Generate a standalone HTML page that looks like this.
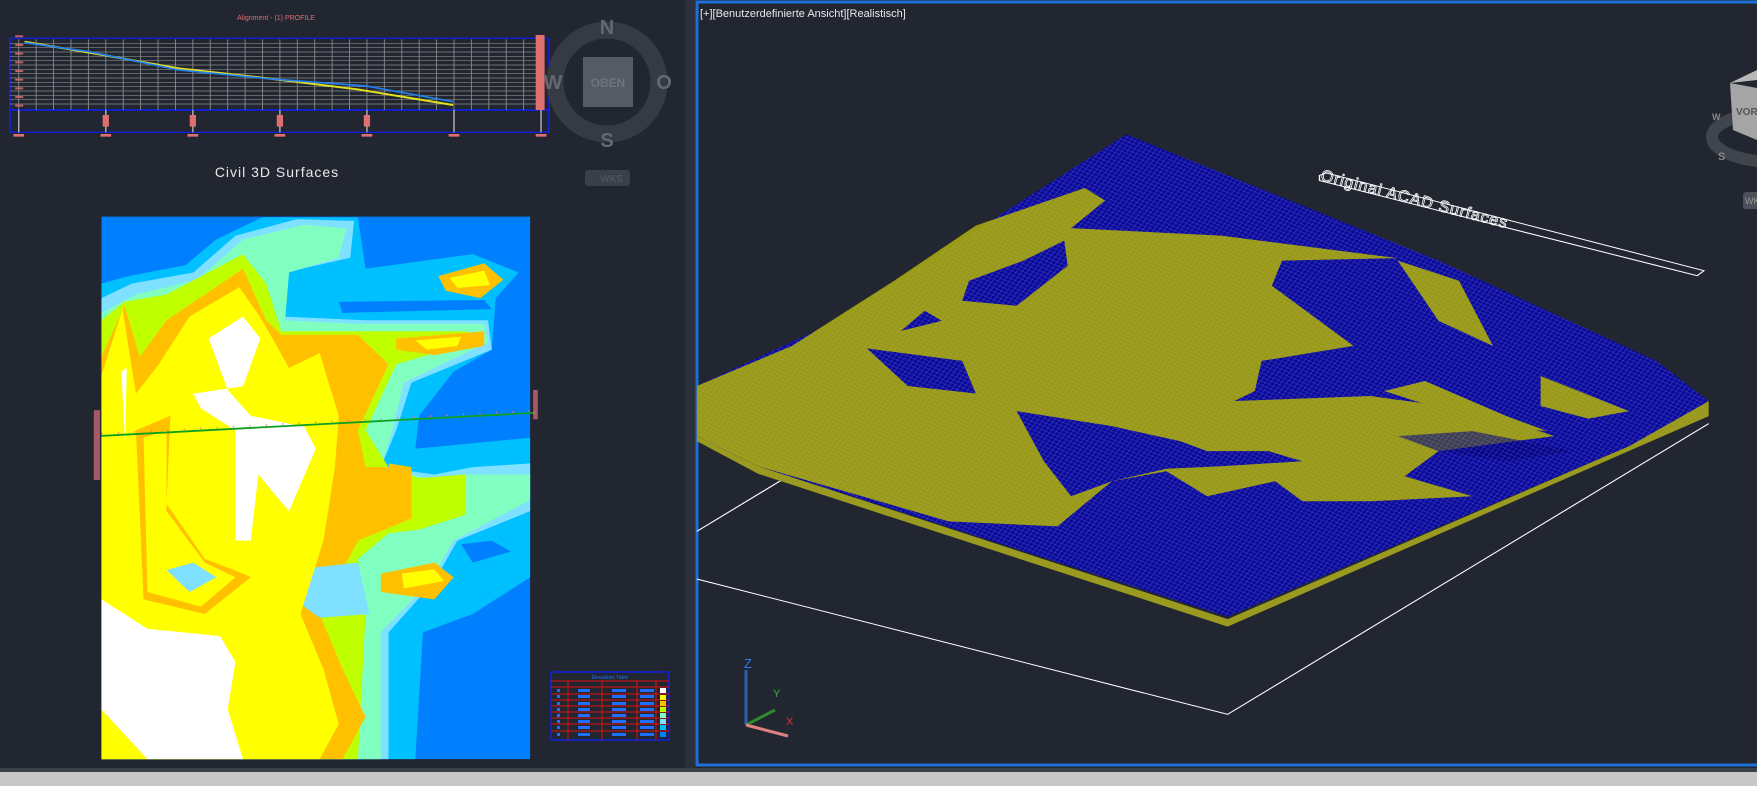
<!DOCTYPE html>
<html><head><meta charset="utf-8"><style>
html,body{margin:0;padding:0;width:1757px;height:786px;overflow:hidden;background:#212630;font-family:"Liberation Sans",sans-serif}
svg{position:absolute;left:0;top:0}
</style></head><body>
<svg width="1757" height="786" viewBox="0 0 1757 786" xmlns="http://www.w3.org/2000/svg">
<defs>
<pattern id="mesh" width="7" height="7" patternUnits="userSpaceOnUse" patternTransform="rotate(30)">
<path d="M0 0H7M0 0V7" stroke="#b0b0c0" stroke-width="0.9" opacity="0.6"/>
</pattern>
</defs>
<rect width="1757" height="786" fill="#212630"/>
<rect x="685" y="0" width="10" height="770" fill="#2b303a"/>
<rect x="0" y="768" width="1757" height="4" fill="#3a3f48"/>
<rect x="0" y="772" width="1757" height="14" fill="#c8c8c8"/>

<!-- PROFILE -->
<text x="276" y="20" fill="#e07070" font-size="7" text-anchor="middle">Alignment - (1) PROFILE</text>
<g transform="scale(0.4464,0.3333)">
<rect x="22" y="115" width="1208" height="282" fill="none" stroke="#1020e0" stroke-width="4"/>
<line x1="22" y1="330" x2="1230" y2="330" stroke="#1020e0" stroke-width="5"/>
<g stroke="#8a8a8a" stroke-width="2">
<path d="M42 118V330M81 118V330M120 118V330M159 118V330M198 118V330M237 118V330M276 118V330M315 118V330M354 118V330M393 118V330M432 118V330M471 118V330M510 118V330M549 118V330M588 118V330M627 118V330M666 118V330M705 118V330M744 118V330M783 118V330M822 118V330M861 118V330M900 118V330M939 118V330M978 118V330M1017 118V330M1056 118V330M1095 118V330M1134 118V330M1173 118V330"/>
<path d="M22 130H1200M22 143H1200M22 156H1200M22 169H1200M22 182H1200M22 195H1200M22 208H1200M22 221H1200M22 234H1200M22 247H1200M22 260H1200M22 273H1200M22 286H1200M22 299H1200M22 312H1200"/>
<path d="M42 330V397M237 330V397M432 330V397M627 330V397M822 330V397M1017 330V397M1212 330V397" stroke="#bbb" stroke-width="3"/>
</g>
<rect x="1200" y="105" width="20" height="225" fill="#e07070"/>
<polyline points="55,125 200,158 400,205 600,235 800,268 1015,315" fill="none" stroke="#e0e020" stroke-width="6"/>
<polyline points="55,128 200,155 400,210 600,236 820,258 1015,305" fill="none" stroke="#2080f0" stroke-width="5"/>
<g fill="#e07070"><rect x="230" y="345" width="14" height="35"/><rect x="425" y="345" width="14" height="35"/><rect x="620" y="345" width="14" height="35"/><rect x="815" y="345" width="14" height="35"/>
<rect x="30" y="402" width="24" height="8"/><rect x="225" y="402" width="24" height="8"/><rect x="420" y="402" width="24" height="8"/><rect x="615" y="402" width="24" height="8"/><rect x="810" y="402" width="24" height="8"/><rect x="1005" y="402" width="24" height="8"/><rect x="1200" y="402" width="24" height="8"/>
<g opacity="0.8"><rect x="34" y="106" width="18" height="6"/><rect x="34" y="132" width="18" height="6"/><rect x="34" y="158" width="18" height="6"/><rect x="34" y="184" width="18" height="6"/><rect x="34" y="210" width="18" height="6"/><rect x="34" y="236" width="18" height="6"/><rect x="34" y="262" width="18" height="6"/><rect x="34" y="288" width="18" height="6"/><rect x="34" y="314" width="18" height="6"/></g></g>
</g>
<text x="277" y="177" fill="#e8e8e8" font-size="14" text-anchor="middle" letter-spacing="1">Civil 3D Surfaces</text>

<!-- compass -->
<circle cx="607" cy="82" r="52" fill="none" stroke="#353a43" stroke-width="17"/>
<rect x="583" y="57" width="50" height="50" fill="#555a63"/>
<text x="608" y="87" fill="#6e747e" font-size="12" font-weight="bold" text-anchor="middle">OBEN</text>
<g fill="#636872" font-size="20" font-weight="bold" text-anchor="middle">
<text x="607" y="34">N</text><text x="607" y="147">S</text><text x="553" y="89">W</text><text x="664" y="89">O</text></g>
<rect x="585" y="170" width="45" height="16" rx="3" fill="#3a3f48"/>
<text x="600" y="182" fill="#555b64" font-size="10">WKS</text>

<!-- MAP -->
<g transform="translate(90,210) scale(0.3827,0.3673)">
<rect x="30" y="18" width="1120" height="1477" fill="#0080ff"/>
<polygon fill="#00c0ff" points="30,200 100,180 250,150 330,80 450,20 700,20 720,160 1000,120 1120,170 1060,240 1050,380 950,440 860,560 850,650 1150,620 1150,1000 1000,1100 870,1150 850,1495 30,1495"/>
<polygon fill="#80e0ff" points="30,240 110,200 270,170 380,70 540,25 690,30 680,130 510,170 500,290 720,300 1040,300 1050,380 840,470 800,600 760,700 900,720 1000,700 1150,690 1150,820 960,900 900,1010 780,1150 780,1495 30,1495"/>
<polygon fill="#80ffc0" points="30,280 120,230 280,190 400,80 560,40 670,50 650,130 520,170 510,300 700,310 1030,310 1040,360 820,470 790,600 760,700 880,730 990,720 1150,720 1150,790 950,900 890,1010 760,1150 760,1495 30,1495"/>
<polygon fill="#c0ff00" points="30,300 90,250 200,230 400,120 460,200 500,330 780,330 980,330 1030,350 800,420 720,600 780,700 860,730 980,720 980,830 860,870 780,880 700,950 720,1100 700,1495 30,1495"/>
<polygon fill="#ffc000" points="30,400 90,260 130,400 200,300 400,160 460,300 500,340 700,340 780,420 700,600 720,700 790,700 840,840 700,900 600,1100 660,1250 720,1380 660,1495 30,1495"/>
<polygon fill="#c0ff00" points="150,960 260,940 380,1000 300,1060 180,1040"/>
<polygon fill="#80e0ff" points="440,990 700,960 730,1100 600,1110"/>
<polygon fill="#ffff00" points="30,450 85,270 120,500 180,420 260,290 390,210 450,300 520,430 600,390 650,560 640,700 610,900 550,1100 610,1250 650,1400 600,1495 30,1495"/>
<polygon fill="#ffc000" points="120,600 210,560 200,800 300,950 400,990 420,1000 300,1100 140,1060"/>
<polygon fill="#ffff00" points="140,620 200,600 200,820 300,960 380,1000 290,1080 150,1040"/>
<polygon fill="#80e0ff" points="200,980 270,960 330,1000 260,1040"/>
<polygon fill="#ffffff" points="310,350 400,290 445,350 400,480 270,500 290,540 380,600 380,900 420,900 440,720 520,820 590,650 560,590 420,560 360,490"/>
<polygon fill="#ffffff" points="30,1060 150,1140 340,1160 380,1230 360,1360 400,1495 150,1495 30,1360"/>
<polygon fill="#ffffff" points="82,440 96,430 92,640"/>
<polygon fill="#ffc000" points="760,990 900,960 950,1000 900,1060 760,1040"/>
<polygon fill="#ffff00" points="815,990 900,978 925,1010 820,1030"/>
<polygon fill="#ffc000" points="780,690 840,700 840,840 800,840"/>
<polygon fill="#ffc000" points="910,180 1030,145 1080,190 1020,240 930,220"/>
<polygon fill="#ffff00" points="940,185 1030,165 1045,205 960,212"/>
<polygon fill="#ffc000" points="800,350 1030,330 1030,370 900,395 800,380"/>
<polygon fill="#ffff00" points="850,355 970,345 960,370 880,380"/>
<polygon fill="#0080ff" points="650,250 1030,245 1050,270 660,280"/>
<polygon fill="#0080ff" points="970,910 1050,900 1100,930 1000,960"/>
<line x1="30" y1="615" x2="1165" y2="552" stroke="#10a020" stroke-width="5"/>
<line x1="30" y1="609" x2="1165" y2="546" stroke="#ff7080" stroke-width="4" stroke-dasharray="3 40"/>
<rect x="10" y="545" width="16" height="190" fill="#e07080" opacity="0.7"/>
<rect x="1158" y="490" width="12" height="80" fill="#e07080" opacity="0.7"/>
</g>

<!-- table -->
<g>
<rect x="551" y="672" width="118" height="68" fill="#212630" stroke="#1020e0" stroke-width="1.5"/>
<text x="610" y="679" fill="#2070ff" font-size="5" text-anchor="middle">Elevations Table</text>
<g stroke="#e01010" stroke-width="1">
<path d="M551 681H669M551 687H669M551 694H669M551 700H669M551 706H669M551 712H669M551 718H669M551 724H669M551 731H669"/>
<path d="M568 681V740M602 681V740M637 681V740M656 681V740"/></g>
<g><rect x="660" y="688" width="6" height="5" fill="#fff"/><rect x="660" y="695" width="6" height="5" fill="#ff0"/><rect x="660" y="701" width="6" height="5" fill="#ffc000"/><rect x="660" y="707" width="6" height="5" fill="#c0ff00"/><rect x="660" y="713" width="6" height="5" fill="#80ffc0"/><rect x="660" y="719" width="6" height="5" fill="#80e0ff"/><rect x="660" y="725" width="6" height="5" fill="#00c0ff"/><rect x="660" y="732" width="6" height="5" fill="#0080ff"/></g>
<g fill="#2070ff">
<rect x="557" y="689" width="3" height="3"/><rect x="578" y="689" width="12" height="3"/><rect x="612" y="689" width="14" height="3"/><rect x="640" y="689" width="14" height="3"/>
<rect x="557" y="695" width="3" height="3"/><rect x="578" y="695" width="12" height="3"/><rect x="612" y="695" width="14" height="3"/><rect x="640" y="695" width="14" height="3"/>
<rect x="557" y="702" width="3" height="3"/><rect x="578" y="702" width="12" height="3"/><rect x="612" y="702" width="14" height="3"/><rect x="640" y="702" width="14" height="3"/>
<rect x="557" y="708" width="3" height="3"/><rect x="578" y="708" width="12" height="3"/><rect x="612" y="708" width="14" height="3"/><rect x="640" y="708" width="14" height="3"/>
<rect x="557" y="714" width="3" height="3"/><rect x="578" y="714" width="12" height="3"/><rect x="612" y="714" width="14" height="3"/><rect x="640" y="714" width="14" height="3"/>
<rect x="557" y="720" width="3" height="3"/><rect x="578" y="720" width="12" height="3"/><rect x="612" y="720" width="14" height="3"/><rect x="640" y="720" width="14" height="3"/>
<rect x="557" y="726" width="3" height="3"/><rect x="578" y="726" width="12" height="3"/><rect x="612" y="726" width="14" height="3"/><rect x="640" y="726" width="14" height="3"/>
<rect x="557" y="733" width="3" height="3"/><rect x="578" y="733" width="12" height="3"/><rect x="612" y="733" width="14" height="3"/><rect x="640" y="733" width="14" height="3"/></g>
</g>

<!-- RIGHT VIEWPORT -->
<rect x="697" y="2" width="1062" height="763" fill="none" stroke="#1e6fd8" stroke-width="3"/>
<text x="700" y="17" fill="#e8e8e8" font-size="11">[+][Benutzerdefinierte Ansicht][Realistisch]</text>

<g transform="translate(690,0) scale(0.6805,0.5013)">
<polyline points="10,1155 790,1425 1497,845" fill="none" stroke="#fff" stroke-width="2"/>
<line x1="10" y1="1060" x2="150" y2="945" stroke="#fff" stroke-width="2"/>
<polygon fill="#9a9a20" points="10,870 100,930 790,1235 1380,890 1497,800 1497,830 790,1250 100,945 10,880"/>
<polygon fill="#0a0aa0" points="10,770 200,650 641,268 1100,520 1420,720 1497,800 1380,890 790,1230 100,930 10,870"/>
<polygon fill="#9a9a12" points="10,770 150,690 300,560 420,450 580,375 610,400 560,455 780,470 1040,515 870,520 855,570 975,690 840,720 830,780 800,800 1000,790 1160,820 1270,870 1100,900 1050,950 1150,990 1000,1000 900,1000 860,960 760,990 700,940 620,960 540,1050 380,1040 100,930 10,870"/>
<polygon fill="#0a0aa0" points="260,695 400,720 420,785 320,770"/>
<polygon fill="#0a0aa0" points="410,560 490,520 550,480 555,530 480,610 400,600"/>
<polygon fill="#0a0aa0" points="310,660 345,620 370,640"/>
<polygon fill="#0a0aa0" points="480,820 620,850 720,880 760,900 850,900 900,920 780,930 700,935 620,960 560,990 520,920"/>
<polygon fill="#9a9a12" points="1040,520 1130,560 1180,690 1100,640"/>
<polygon fill="#9a9a12" points="1250,750 1380,820 1320,835 1250,810"/>
<polygon fill="#9a9a12" points="1020,780 1080,760 1200,830 1260,860 1180,850"/>
<polygon fill="#000080" opacity="0.6" points="1040,870 1150,860 1300,900 1200,920 1100,900"/>
<polygon fill="url(#mesh)" points="10,770 200,650 641,268 1100,520 1420,720 1497,800 1380,890 790,1230 100,930 10,870"/>
<polygon fill="none" stroke="#fff" stroke-width="2" points="925,350 935,345 1490,540 1480,550 925,360"/>
</g>
<text transform="translate(1320,180) rotate(14.5)" fill="none" stroke="#fff" stroke-width="0.8" font-size="16" letter-spacing="1">Original ACAD Surfaces</text>

<!-- UCS -->
<g stroke-width="3">
<line x1="746" y1="725" x2="746" y2="670" stroke="#2a5db0"/>
<line x1="746" y1="725" x2="775" y2="710" stroke="#2e8a2e"/>
<line x1="746" y1="725" x2="788" y2="736" stroke="#e08080"/>
</g>
<text x="744" y="668" fill="#2a7af0" font-size="13">Z</text>
<text x="773" y="697" fill="#3fb03f" font-size="11">Y</text>
<text x="786" y="725" fill="#e03030" font-size="11">X</text>

<!-- viewcube -->
<ellipse cx="1775" cy="137" rx="63" ry="25" fill="none" stroke="#3f444d" stroke-width="12"/>
<polygon points="1730,83 1757,70 1757,80" fill="#b8b8b8"/>
<polygon points="1730,83 1757,88 1757,140 1733,130" fill="#a5a5a5"/>
<text x="1736" y="115" fill="#555" font-size="10" font-weight="bold">VORN</text>
<text x="1712" y="120" fill="#888" font-size="9" font-weight="bold">W</text>
<text x="1718" y="160" fill="#888" font-size="11" font-weight="bold">S</text>
<rect x="1743" y="192" width="20" height="17" rx="3" fill="#4b505a"/>
<text x="1745" y="204" fill="#999" font-size="9">WK</text>
</svg>
</body></html>
